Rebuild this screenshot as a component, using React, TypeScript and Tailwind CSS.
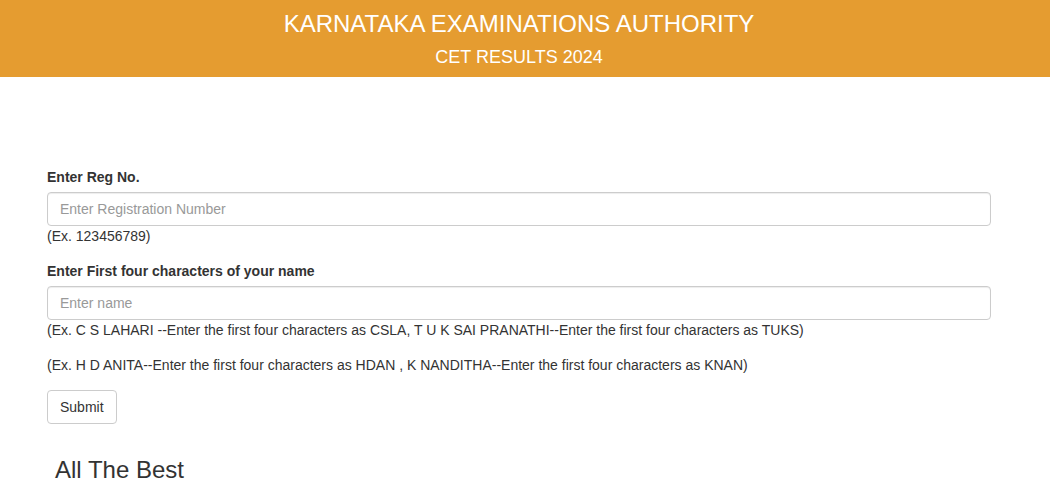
export default function App() {
  return (
    <div className="min-h-[496px] bg-white text-[14px] leading-[20px] text-[#333]" style={{ fontFamily: '"Liberation Sans", Arial, sans-serif' }}>
      <header className="flex h-[77px] flex-col items-center bg-[#e59c30] pr-[12px] pt-[7px] text-white">
        <h1 className="text-[24px] leading-[33px]">KARNATAKA EXAMINATIONS AUTHORITY</h1>
        <h2 className="mt-[6px] text-[18px] leading-[22px]">CET RESULTS 2024</h2>
      </header>

      <main className="w-[1038px] px-[47px] pt-[90px]">
        <form onSubmit={e => e.preventDefault()}>
          <div className="mb-[15px]">
            <label className="mb-[5px] block font-bold">Enter Reg No.</label>
            <input
              className="block h-[34px] w-full rounded-[4px] border border-[#ccc] px-[12px] text-[14px] text-[#555] shadow-[inset_0_1px_1px_rgba(0,0,0,0.075)] outline-none placeholder:text-[#999]"
              placeholder="Enter Registration Number"
            />
            <p>(Ex. 123456789)</p>
          </div>

          <div className="mb-[15px]">
            <label className="mb-[5px] block font-bold">Enter First four characters of your name</label>
            <input
              className="block h-[34px] w-full rounded-[4px] border border-[#ccc] px-[12px] text-[14px] text-[#555] shadow-[inset_0_1px_1px_rgba(0,0,0,0.075)] outline-none placeholder:text-[#999]"
              placeholder="Enter name"
            />
            <p>(Ex. C S LAHARI --Enter the first four characters as CSLA, T U K SAI PRANATHI--Enter the first four characters as TUKS)</p>
            <p className="mt-[15px]">(Ex. H D ANITA--Enter the first four characters as HDAN , K NANDITHA--Enter the first four characters as KNAN)</p>
          </div>

          <button className="h-[34px] rounded-[4px] border border-[#ccc] bg-white px-[12px] text-[14px] text-[#333]">Submit</button>
        </form>

        <h3 className="mt-[33px] pl-[8px] text-[24px] leading-[26px]">All The Best</h3>
      </main>
    </div>
  )
}
